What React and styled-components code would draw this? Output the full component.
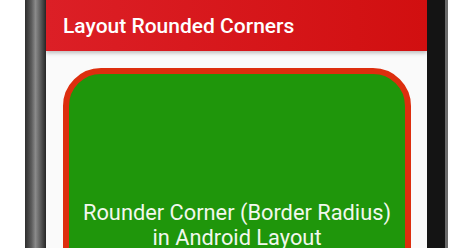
import styled, { createGlobalStyle } from "styled-components";

const GlobalStyle = createGlobalStyle`
  html, body {
    margin: 0;
    padding: 0;
    background: #ffffff;
    overflow: hidden;
  }
  body {
    font-family: Roboto, "Liberation Sans", sans-serif;
  }
`;

const Page = styled.div`
  width: 474px;
  height: 248px;
  display: flex;
  padding-left: 25px;
  box-sizing: border-box;
`;

const FrameLeft = styled.div`
  width: 21px;
  background: linear-gradient(
    to right,
    #2e2e2e 0%,
    #5a5a5a 30%,
    #8a8a8a 50%,
    #5a5a5a 75%,
    #262626 100%
  );
`;

const FrameRight = styled.div`
  width: 18px;
  background: #141414;
  border-right: 3px solid #6a6a6a;
`;

const Screen = styled.div`
  width: 381px;
  display: flex;
  flex-direction: column;
  background: #fafafa;
  overflow: hidden;
`;

const AppBar = styled.div`
  height: 51px;
  flex-shrink: 0;
  display: flex;
  align-items: center;
  padding-left: 17px;
  background: linear-gradient(to right, #dc1f26, #d10f10);
  box-shadow: 0 2px 4px rgba(0, 0, 0, 0.25);
  position: relative;
  z-index: 1;
`;

const Title = styled.h1`
  margin: 0;
  color: #ffffff;
  font-size: 21px;
  font-weight: 500;
`;

const Content = styled.div`
  padding: 17px 16px 0 17px;
`;

const RoundedBox = styled.div`
  height: 220px;
  box-sizing: border-box;
  border: 6px solid #dd2e0e;
  border-radius: 38px;
  background: #1f960b;
  padding-top: 126px;
  color: #f2f8ee;
  text-align: center;
  font-size: 21.8px;
  line-height: 25px;
`;

export default function App() {
  return (
    <>
      <GlobalStyle />
      <Page>
        <FrameLeft />
        <Screen>
          <AppBar>
            <Title>Layout Rounded Corners</Title>
          </AppBar>
          <Content>
            <RoundedBox>
              Rounder Corner (Border Radius)
              <br />
              in Android Layout
            </RoundedBox>
          </Content>
        </Screen>
        <FrameRight />
      </Page>
    </>
  );
}
